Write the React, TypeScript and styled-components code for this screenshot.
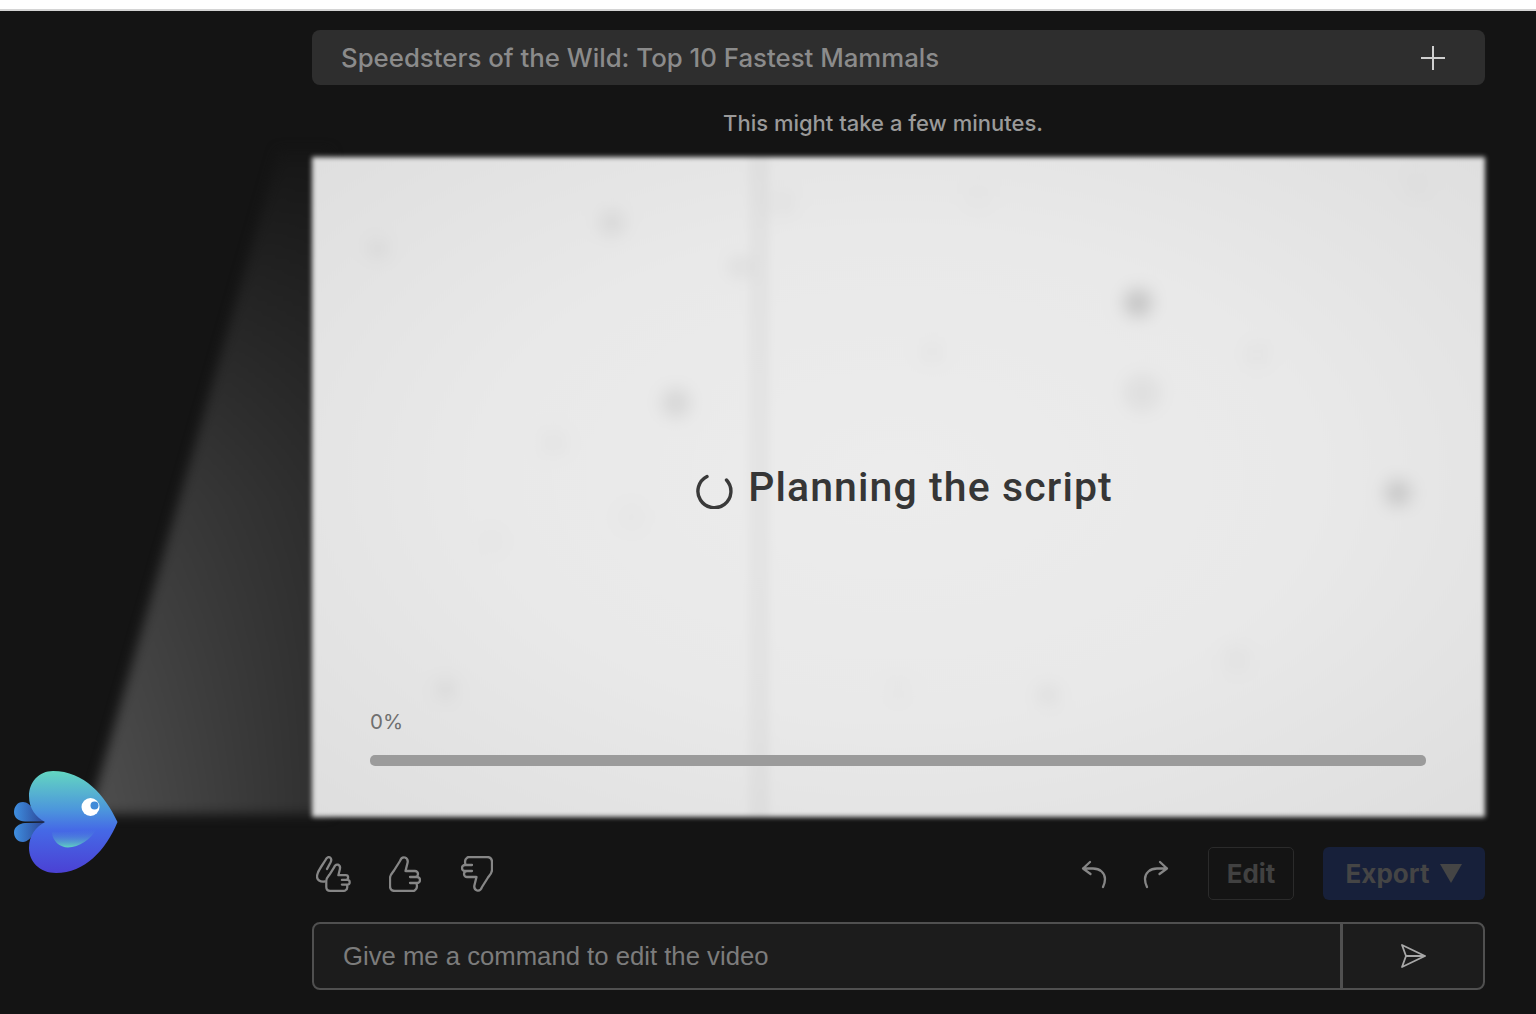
import React from 'react';
import styled, { createGlobalStyle } from 'styled-components';

const GlobalStyle = createGlobalStyle`
    html, body {
        margin: 0;
        padding: 0;
        background: #141414;
    }
    * {
        box-sizing: border-box;
    }
`;

// soft stains on the blurred paper behind the loader, panel coordinates
const spots = [
    { x: 300, y: 66, r: 12, o: 0.1 },
    { x: 66, y: 92, r: 11, o: 0.05 },
    { x: 428, y: 110, r: 11, o: 0.08 },
    { x: 470, y: 46, r: 14, o: 0.03 },
    { x: 826, y: 146, r: 14, o: 0.24 },
    { x: 620, y: 196, r: 12, o: 0.03 },
    { x: 945, y: 198, r: 14, o: 0.03 },
    { x: 830, y: 236, r: 18, o: 0.07 },
    { x: 364, y: 246, r: 14, o: 0.13 },
    { x: 242, y: 286, r: 14, o: 0.03 },
    { x: 1086, y: 336, r: 13, o: 0.21 },
    { x: 320, y: 360, r: 16, o: 0.02 },
    { x: 180, y: 384, r: 14, o: 0.02 },
    { x: 134, y: 532, r: 12, o: 0.05 },
    { x: 736, y: 538, r: 12, o: 0.05 },
    { x: 586, y: 532, r: 14, o: 0.02 },
    { x: 924, y: 502, r: 15, o: 0.03 },
    { x: 666, y: 40, r: 14, o: 0.02 },
    { x: 1104, y: 28, r: 14, o: 0.02 },
];

const Fish = () => (
    <FishMark viewBox="10 768 112 108" width="112" height="108" aria-hidden="true">
        <defs>
            <linearGradient id="fishBody" x1="0" y1="771" x2="0" y2="873" gradientUnits="userSpaceOnUse">
                <stop offset="0" stopColor="#63d6c1" />
                <stop offset="0.38" stopColor="#4c96dc" />
                <stop offset="0.58" stopColor="#4569e6" />
                <stop offset="1" stopColor="#4b41d4" />
            </linearGradient>
            <linearGradient id="fishFin" x1="0" y1="828" x2="0" y2="847" gradientUnits="userSpaceOnUse">
                <stop offset="0" stopColor="#4569e6" stopOpacity="0" />
                <stop offset="1" stopColor="#5fcdc3" />
            </linearGradient>
            <linearGradient id="fishTail" x1="14" y1="0" x2="46" y2="0" gradientUnits="userSpaceOnUse">
                <stop offset="0" stopColor="#3f8fe0" />
                <stop offset="1" stopColor="#2a3f90" />
            </linearGradient>
        </defs>
        <path fill="url(#fishTail)" d="M46 821.5C38 816 31 802 23 802C17 802 14 807 14 812C14 818 19 821.5 25 821.5Z" />
        <path fill="url(#fishTail)" d="M46 822.5C38 824 32 842 23 842C17 842 14 837 14 832.5C14 827 19 823.5 25 823Z" />
        <path
            fill="url(#fishBody)"
            d="M117.5 822C105 795 84 771 53 771C39 771 29 782 29 796C29 809 36 817 45 822C36 827 29 835 29 848C29 862 40 873 56 873C85 873 106 850 117.5 822Z"
        />
        <path fill="url(#fishFin)" d="M52 832C52 841 60 847.5 68 847.5C79 847 91 840 97 828C82 831 66 833 52 832Z" />
        <circle cx="90.5" cy="807" r="9" fill="#fff" />
        <circle cx="94.5" cy="805.5" r="4" fill="#3f8ad8" />
    </FishMark>
);

const thumbPath =
    'M6 35C3 35 1 33 1 30V22C1 19 3 17 5 14.5L11 5C12 2 14 1 16 1.5C18.5 2.5 19 5 18.5 7L16.5 15H26A3 3 0 0 1 26 21H21M26 21H28A3 3 0 0 1 28 27H21M26.5 27C28.5 27.5 28.5 33 26 34C25.5 35 25 35 24 35H6';

const ThumbUp = () => (
    <Glyph width="32" height="36" viewBox="0 0 32 36">
        <path d={thumbPath} />
    </Glyph>
);

const ThumbDown = () => (
    <DownGlyph width="32" height="36" viewBox="0 0 32 36">
        <path d={thumbPath} transform="rotate(180 16 18)" />
    </DownGlyph>
);

const ThumbDouble = () => (
    <Glyph width="36" height="36" viewBox="0 0 36 36">
        <path d="M8.5 25.5C4 26 1 24 1 20.5C1 17 3 14 5 11L9.5 4C10.5 1.5 12.5 0.5 14 1.5C15.5 2.5 15.5 4.5 14.5 6.5L11 13" />
        <path d={thumbPath} transform="translate(9.5 7.5) scale(0.78)" strokeWidth="2.9" />
    </Glyph>
);

const Undo = () => (
    <Glyph width="28" height="30" viewBox="0 0 28 30">
        <path d="M10 3L3 9.5L10.5 15M3 9.5H13C20 9.5 25 14 25 20C25 23 24 26 23 28" />
    </Glyph>
);

const Redo = () => (
    <Glyph width="28" height="30" viewBox="0 0 28 30">
        <path d="M18 3L25 9.5L17.5 15M25 9.5H15C8 9.5 3 14 3 20C3 23 4 26 5 28" />
    </Glyph>
);

const SendIcon = () => (
    <Glyph $color="#a8a8a8" $weight={1.8} width="28" height="26" viewBox="0 0 28 26">
        <path d="M26 13L3 2L7 13L3 24ZM7 13H26" />
    </Glyph>
);

const App = () => {
    return (
        <>
            <GlobalStyle />
            <Page>
                <TopStrip />
                <Stage>
                    <Side>
                        <BeamGlow>
                            <Beam />
                        </BeamGlow>
                        <Fish />
                    </Side>
                    <Main>
                        <TitleBar>
                            <TitleText>Speedsters of the Wild: Top 10 Fastest Mammals</TitleText>
                            <PlusIcon width="26" height="26" viewBox="0 0 26 26">
                                <path d="M13 1V25M1 13H25" />
                            </PlusIcon>
                        </TitleBar>
                        <Hint>This might take a few minutes.</Hint>
                        <Preview>
                            <Paper>
                                <svg width="100%" height="100%" viewBox="0 0 1173 660" aria-hidden="true">
                                    {spots.map((s) => (
                                        <circle key={`${s.x}-${s.y}`} cx={s.x} cy={s.y} r={s.r} fill="#555" opacity={s.o} />
                                    ))}
                                </svg>
                            </Paper>
                            <PreviewBody>
                                <Status>
                                    <Spinner width="38" height="38" viewBox="0 0 38 38">
                                        <path d="M12 5.5A16.5 16.5 0 1 0 31.5 9" />
                                    </Spinner>
                                    <StatusText>Planning the script</StatusText>
                                </Status>
                                <Percent>0%</Percent>
                                <Track />
                            </PreviewBody>
                        </Preview>
                        <Toolbar>
                            <Reactions>
                                <ThumbDouble />
                                <ThumbUp />
                                <ThumbDown />
                            </Reactions>
                            <Actions>
                                <History>
                                    <Undo />
                                    <Redo />
                                </History>
                                <EditButton>Edit</EditButton>
                                <ExportButton>
                                    Export
                                    <Caret />
                                </ExportButton>
                            </Actions>
                        </Toolbar>
                        <CommandBar>
                            <CommandInput>Give me a command to edit the video</CommandInput>
                            <SendButton>
                                <SendIcon />
                            </SendButton>
                        </CommandBar>
                    </Main>
                </Stage>
            </Page>
        </>
    );
};
export default App;

const Page = styled.div`
    width: 1536px;
    height: 1014px;
    overflow: hidden;
    display: flex;
    flex-direction: column;
    background: #141414;
    font-family: Inter, 'Liberation Sans', sans-serif;
`;

const TopStrip = styled.div`
    height: 11px;
    flex: none;
    background: #fff;
    border-bottom: 2px solid #d4d4d4;
`;

const Stage = styled.div`
    flex: 1;
    display: grid;
    grid-template-columns: 312px 1173px;
`;

const Side = styled.div`
    position: relative;
`;

// filter runs before clip-path on one element, so the blur sits on a wrapper
const BeamGlow = styled.div`
    position: absolute;
    left: 0;
    top: 0;
    filter: blur(6px);
`;

const Beam = styled.div`
    width: 330px;
    height: 812px;
    background:
        linear-gradient(105deg, rgba(20, 20, 20, 0) 56%, rgba(20, 20, 20, 0.5) 96%),
        linear-gradient(to bottom, #161616 17%, #252525 36%, #383838 60%, #4e4e4e 98%);
    clip-path: polygon(279px 140px, 330px 140px, 330px 803px, 89px 803px);
`;

const FishMark = styled.svg`
    position: absolute;
    left: 10px;
    top: 757px;
`;

const Main = styled.div`
    display: flex;
    flex-direction: column;
    padding-top: 19px;
`;

const TitleBar = styled.div`
    height: 55px;
    padding: 0 39px 0 29px;
    display: flex;
    align-items: center;
    justify-content: space-between;
    background: #2e2e2e;
    border-radius: 8px;
`;

const TitleText = styled.div`
    font-size: 25.8px;
    font-weight: 500;
    color: #8b8b8b;
`;

const PlusIcon = styled.svg`
    fill: none;
    stroke: #cfcfcf;
    stroke-width: 2;
`;

const Hint = styled.div`
    height: 72px;
    padding: 23px 31px 0 0;
    text-align: center;
    font-size: 22px;
    line-height: 30px;
    font-weight: 500;
    color: #9a9a9a;
`;

const Preview = styled.div`
    position: relative;
    height: 660px;
`;

const Paper = styled.div`
    position: absolute;
    inset: 0;
    filter: blur(2.5px);
    background:
        linear-gradient(to right, transparent 36.8%, rgba(0, 0, 0, 0.028) 37.6%, rgba(0, 0, 0, 0.03) 38.6%, transparent 39.4%),
        radial-gradient(ellipse at 50% 48%, #ececec 0%, #e9e9e9 50%, #dedede 100%);

    svg {
        display: block;
        filter: blur(8px);
    }
`;

const PreviewBody = styled.div`
    position: relative;
    height: 100%;
    padding: 304px 59px 0 58px;
    display: flex;
    flex-direction: column;
`;

const Status = styled.div`
    height: 52px;
    display: flex;
    align-items: center;
    justify-content: center;
    gap: 15px;
    padding-left: 12px;
`;

const Spinner = styled.svg`
    fill: none;
    stroke: #3a3a3a;
    stroke-width: 3.4;
    stroke-linecap: round;
    margin-top: 5px;
`;

const StatusText = styled.div`
    font-family: Roboto, 'Noto Sans', sans-serif;
    font-size: 41px;
    font-weight: 500;
    letter-spacing: 1.1px;
    color: #363636;
`;

const Percent = styled.div`
    margin-top: 194px;
    font-size: 20.5px;
    line-height: 30px;
    color: #6f6f6f;
`;

const Track = styled.div`
    margin-top: 18px;
    height: 10.5px;
    border-radius: 5px;
    background: #9b9b9b;
`;

const Toolbar = styled.div`
    height: 53px;
    margin-top: 30px;
    display: flex;
    align-items: center;
    justify-content: space-between;
`;

const Reactions = styled.div`
    display: flex;
    align-items: center;
    gap: 37px;
    padding-left: 4px;
`;

const Glyph = styled.svg<{ $color?: string; $weight?: number }>`
    fill: none;
    stroke: ${(p) => p.$color ?? '#868686'};
    stroke-width: ${(p) => p.$weight ?? 2.3};
    stroke-linecap: round;
    stroke-linejoin: round;
`;

const DownGlyph = styled(Glyph)`
    margin-left: 3px;
`;

const Actions = styled.div`
    display: flex;
    align-items: center;
`;

const History = styled.div`
    display: flex;
    align-items: center;
    gap: 34px;
    margin-right: 38px;
`;

const EditButton = styled.div`
    width: 86px;
    height: 53px;
    display: flex;
    align-items: center;
    justify-content: center;
    margin-right: 29px;
    border: 1.5px solid #2b2b2b;
    border-radius: 5px;
    font-size: 26px;
    font-weight: 700;
    color: #414141;
`;

const ExportButton = styled.div`
    width: 162px;
    height: 53px;
    display: flex;
    align-items: center;
    justify-content: center;
    gap: 11px;
    background: #17203a;
    border-radius: 6px;
    font-size: 26px;
    font-weight: 700;
    color: #454545;
`;

const Caret = styled.span`
    width: 0;
    height: 0;
    border-left: 11px solid transparent;
    border-right: 11px solid transparent;
    border-top: 19px solid #454545;
`;

const CommandBar = styled.div`
    height: 68px;
    margin-top: 22px;
    display: flex;
    background: #1c1c1c;
    border: 2px solid #505050;
    border-radius: 8px;
`;

const CommandInput = styled.div`
    flex: 1;
    display: flex;
    align-items: center;
    padding-left: 29px;
    font-family: 'Liberation Sans', Arial, sans-serif;
    font-size: 25.7px;
    color: #7c7c7c;
    border-right: 3px solid #505050;
`;

const SendButton = styled.div`
    width: 140px;
    display: flex;
    align-items: center;
    justify-content: center;
`;
